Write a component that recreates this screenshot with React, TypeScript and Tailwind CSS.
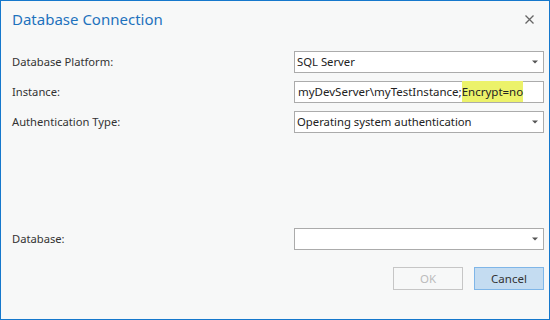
import React from "react";

function Arrow() {
  return (
    <svg width="6" height="4" viewBox="0 0 6 4" className="shrink-0">
      <path d="M0 0.5 L6 0.5 L3 3.5 Z" fill="#555" />
    </svg>
  );
}

function Select({ value }: { value: string }) {
  return (
    <div className="w-[250px] h-[22px] border border-[#ababab] bg-white flex items-center pl-[2px] pr-[5px]">
      <span className="flex-1 text-[11.3px] text-[#222] leading-none">{value}</span>
      <Arrow />
    </div>
  );
}

function Row({ label, children }: { label: string; children: React.ReactNode }) {
  return (
    <div className="flex items-center h-[22px]">
      <span className="flex-1 pl-[11px] text-[11.2px] text-[#333]">{label}</span>
      {children}
    </div>
  );
}

export default function App() {
  return (
    <div
      className="w-[550px] h-[320px] border border-[#1578cc] bg-[#f7f8f8] flex flex-col"
      style={{ fontFamily: '"Segoe UI", "Noto Sans", sans-serif' }}
    >
      <div className="h-[36px] flex items-center justify-between pl-[11px] pr-[12px]">
        <span className="text-[15px] text-[#1e72bd]">Database Connection</span>
        <svg width="9" height="9" viewBox="0 0 9 9" className="mr-[3px]">
          <path d="M0.5 0.5 L8.5 8.5 M8.5 0.5 L0.5 8.5" stroke="#666" strokeWidth="1.3" />
        </svg>
      </div>
      <div className="pt-[14px] pr-[5px] flex flex-col gap-[8px]">
        <Row label="Database Platform:">
          <Select value="SQL Server" />
        </Row>
        <Row label="Instance:">
          <div className="w-[250px] h-[22px] border border-[#ababab] bg-white flex items-center pl-[3px]">
            <span className="text-[11.5px] text-[#222] leading-none whitespace-pre">
              myDevServer\myTestInstance;<span className="bg-[#ecf26a] py-[3px]">Encrypt=no</span>
            </span>
          </div>
        </Row>
        <Row label="Authentication Type:">
          <Select value="Operating system authentication" />
        </Row>
      </div>
      <div className="pt-[95px] pr-[5px]">
        <Row label="Database:">
          <Select value="" />
        </Row>
      </div>
      <div className="pt-[17px] pr-[5px] flex justify-end gap-[11px]">
        <div className="w-[70px] h-[23px] border border-[#c6c6c6] flex items-center justify-center text-[11.5px] text-[#bcbcbc]">
          OK
        </div>
        <div className="w-[70px] h-[23px] border border-[#7fb6e8] bg-[#c4dcf1] flex items-center justify-center text-[11.5px] text-[#333]">
          Cancel
        </div>
      </div>
    </div>
  );
}
